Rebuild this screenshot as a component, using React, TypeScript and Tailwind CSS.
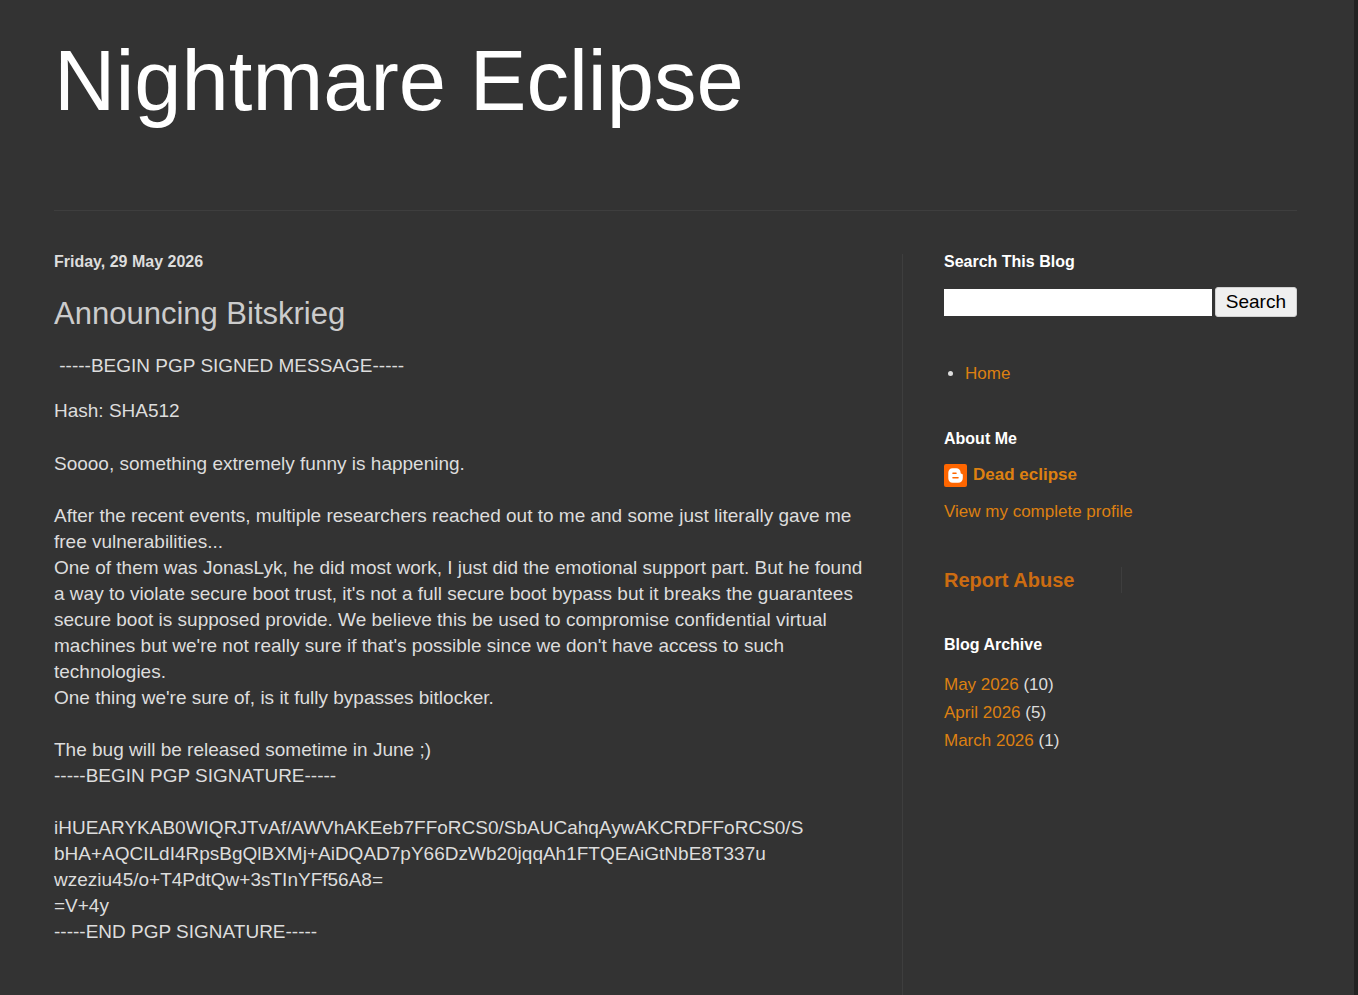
import type { ReactNode } from "react";

const messageLines = [
  "Soooo, something extremely funny is happening.",
  "",
  "After the recent events, multiple researchers reached out to me and some just literally gave me free vulnerabilities...",
  "One of them was JonasLyk, he did most work, I just did the emotional support part. But he found a way to violate secure boot trust, it's not a full secure boot bypass but it breaks the guarantees secure boot is supposed provide. We believe this be used to compromise confidential virtual machines but we're not really sure if that's possible since we don't have access to such technologies.",
  "One thing we're sure of, is it fully bypasses bitlocker.",
  "",
  "The bug will be released sometime in June ;)",
  "-----BEGIN PGP SIGNATURE-----",
  "",
  "iHUEARYKAB0WIQRJTvAf/AWVhAKEeb7FFoRCS0/SbAUCahqAywAKCRDFFoRCS0/S",
  "bHA+AQCILdI4RpsBgQlBXMj+AiDQAD7pY66DzWb20jqqAh1FTQEAiGtNbE8T337u",
  "wzeziu45/o+T4PdtQw+3sTInYFf56A8=",
  "=V+4y",
  "-----END PGP SIGNATURE-----",
];

const archive = [
  { month: "May 2026", count: 10 },
  { month: "April 2026", count: 5 },
  { month: "March 2026", count: 1 },
];

function Link({ children, className = "" }: { children: ReactNode; className?: string }) {
  return (
    <a href="#" className={`text-[#dd8011] hover:text-[#cc6c11] hover:underline ${className}`}>
      {children}
    </a>
  );
}

function SideHeading({ children }: { children: ReactNode }) {
  return <h2 className="text-base leading-4 font-bold text-white">{children}</h2>;
}

function BloggerIcon() {
  return (
    <svg viewBox="0 0 23 23" className="size-[23px] shrink-0" aria-hidden="true">
      <rect width="23" height="23" rx="2" fill="#ff6600" />
      <path
        fill="#fff"
        fillRule="evenodd"
        d="M8.600 4.200h3.600c2.600 0 4.400 1.900 4.400 4.200 0 .9.4 1.300 1 1.400.9.1 1.200.5 1.200 1.300v2.800c0 2.900-1.900 4.900-4.700 4.900H8.600c-2.600 0-4.300-1.900-4.300-4.500V8.700c0-2.700 1.700-4.500 4.300-4.500ZM9 8.400a.8.8 0 0 0 0 1.600h3a.8.8 0 0 0 0-1.600Zm0 4.600a.8.8 0 0 0 0 1.600h5a.8.8 0 0 0 0-1.600Z"
      />
    </svg>
  );
}

export default function App() {
  return (
    <div className="min-h-screen border-r-4 border-[#222222] bg-[#333333] pr-[57px] pl-[54px] font-['Liberation_Sans',Arial,sans-serif] text-[#dddddd]">
      <header className="border-b border-[#3e3e3e] pt-[33px] pb-[81px]">
        <h1 className="text-[85px] leading-[96px] text-white">Nightmare Eclipse</h1>
      </header>

      <div className="grid grid-cols-[minmax(0,1fr)_395px] pt-[43px]">
        <main className="min-h-[741px] pr-8">
          <h2 className="text-base leading-4 font-bold">Friday, 29 May 2026</h2>
          <article>
            <h3 className="mt-6 text-[31px] leading-10 text-[#cccccc]">Announcing Bitskrieg</h3>
            <div className="mt-[19px] text-[19px] leading-[26px]">
              <p>&nbsp;-----BEGIN PGP SIGNED MESSAGE-----</p>
              <p className="mt-[19px] mb-[27px]">Hash: SHA512</p>
              {messageLines.map((line, i) => (
                <p key={i} className="min-h-[26px]">
                  {line}
                </p>
              ))}
            </div>
          </article>
        </main>

        <aside className="border-l border-[#3e3e3e] pl-[41px] text-[17px] leading-6">
          <section>
            <SideHeading>Search This Blog</SideHeading>
            <form className="mt-[17px] flex items-center gap-[3px]" onSubmit={(e) => e.preventDefault()}>
              <input
                type="text"
                aria-label="Search this blog"
                className="h-[27px] min-w-0 flex-1 bg-white px-1 text-black"
              />
              <button
                type="submit"
                className="h-[30px] rounded-[3px] border border-[#d0d0d0] bg-[#efefef] px-2.5 text-[19px] text-black"
              >
                Search
              </button>
            </form>
          </section>

          <ul className="mt-[45px] list-disc pl-[21px]">
            <li>
              <Link>Home</Link>
            </li>
          </ul>

          <section className="mt-[45px]">
            <SideHeading>About Me</SideHeading>
            <div className="mt-4 flex items-center gap-1.5">
              <BloggerIcon />
              <Link className="font-bold">Dead eclipse</Link>
            </div>
            <p className="mt-[13px]">
              <Link>View my complete profile</Link>
            </p>
          </section>

          <section className="mt-[43px] flex w-[178px] border-r border-[#3e3e3e]">
            <a href="#" className="text-xl leading-[26px] font-bold text-[#cc6c11] hover:underline">
              Report Abuse
            </a>
          </section>

          <section className="mt-11">
            <SideHeading>Blog Archive</SideHeading>
            <ul className="mt-[18px] leading-7">
              {archive.map(({ month, count }) => (
                <li key={month}>
                  <Link>{month}</Link> ({count})
                </li>
              ))}
            </ul>
          </section>
        </aside>
      </div>
    </div>
  );
}
